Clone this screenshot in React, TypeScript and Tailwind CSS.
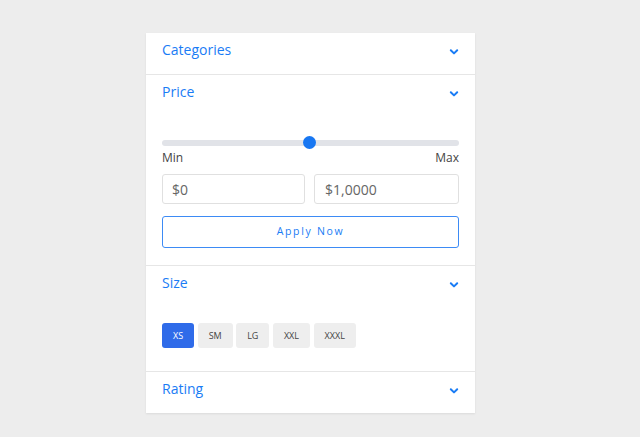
import { useState } from "react";

const sizes = ["XS", "SM", "LG", "XXL", "XXXL"];

function Chevron() {
    return (
        <svg width="10" height="10" viewBox="0 0 10 10" className="mt-1 text-[#1a7cf5]">
            <path d="M1.8 3.2 5 6.4 8.2 3.2" fill="none" stroke="currentColor" strokeWidth="2" strokeLinecap="round" strokeLinejoin="round" />
        </svg>
    );
}

function SectionHeader({ title }: { title: string }) {
    return (
        <div className="flex items-center justify-between">
            <h3 className="text-[14px] leading-5 text-[#1a7cf5]">{title}</h3>
            <Chevron />
        </div>
    );
}

export default function App() {
    const [active, setActive] = useState("XS");

    return (
        <div className="min-h-[437px] bg-[#ededed] pt-[33px] font-['Open_Sans',sans-serif]">
            <div className="ml-[146px] w-[329px] bg-white shadow-[0_1px_2px_rgba(0,0,0,0.08)]">
                {/* Categories */}
                <div className="border-b border-[#e6e6e6] px-4 pt-[7px] pb-[14px]">
                    <SectionHeader title="Categories" />
                </div>

                {/* Price */}
                <div className="border-b border-[#e6e6e6] px-4 pt-[7px] pb-[17px]">
                    <SectionHeader title="Price" />
                    <div className="relative mt-[34px] h-[14px]">
                        <div className="absolute left-0 right-0 top-[3.5px] h-[6px] rounded-full bg-[#e1e3e8]" />
                        <div className="absolute left-[141px] top-0 h-[13px] w-[13px] rounded-full bg-[#1877f2]" />
                    </div>
                    <div className="flex justify-between text-[12px] leading-4 text-[#444]">
                        <span>Min</span>
                        <span>Max</span>
                    </div>
                    <div className="mt-2 flex gap-[9px]">
                        <input
                            defaultValue="$0"
                            className="h-[30px] w-[143px] rounded-[3px] border border-[#e0e0e0] px-[9px] text-[14px] text-[#666] outline-none"
                        />
                        <input
                            defaultValue="$1,0000"
                            className="h-[30px] flex-1 min-w-0 rounded-[3px] border border-[#e0e0e0] px-[10px] text-[14px] text-[#666] outline-none"
                        />
                    </div>
                    <button className="mt-[12px] h-[32px] w-full rounded-[3px] border border-[#3d8bf5] text-[10.5px] font-medium tracking-[0.16em] text-[#1a7cf5]">
                        Apply Now
                    </button>
                </div>

                {/* Size */}
                <div className="border-b border-[#e6e6e6] px-4 pt-[7px] pb-[23px]">
                    <SectionHeader title="Size" />
                    <div className="mt-[30px] flex gap-[3.5px]">
                        {sizes.map((s) => (
                            <button
                                key={s}
                                onClick={() => setActive(s)}
                                className={
                                    s === active
                                        ? "h-[25px] rounded-[3px] bg-[#2f6be9] px-[11px] text-[9px] text-white"
                                        : "h-[25px] rounded-[3px] bg-[#eeeeee] px-[11px] text-[9px] text-[#444]"
                                }
                            >
                                {s}
                            </button>
                        ))}
                    </div>
                </div>

                {/* Rating */}
                <div className="px-4 pt-[7px] pb-[14px]">
                    <SectionHeader title="Rating" />
                </div>
            </div>
        </div>
    );
}
